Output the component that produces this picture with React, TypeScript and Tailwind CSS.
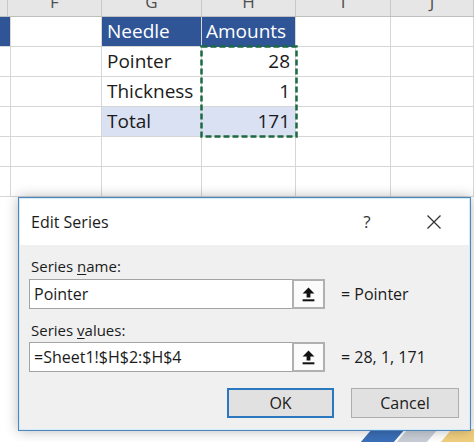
import React from 'react';

const gridCols = 'grid grid-cols-[8px_94px_100px_94px_95px_1fr]';
const cellFont = "font-['Open_Sans','Liberation_Sans',sans-serif]";

type CellProps = {
  children?: React.ReactNode;
  className?: string;
};

function Cell({ children, className = '' }: CellProps) {
  return (
    <div className={`h-[30px] border-r border-b border-[#d6d6d6] flex items-center px-[5px] text-[19px] text-[#1b1b1b] ${className}`}>
      {children}
    </div>
  );
}

function UploadIcon() {
  return (
    <svg width="13" height="15" viewBox="0 0 13 15" fill="#111">
      <path d="M6.5 0.5 L0.6 6.6 L4.6 6.6 L4.6 10.6 L8.4 10.6 L8.4 6.6 L12.4 6.6 Z" />
      <rect x="0.6" y="12.3" width="11.8" height="2" />
    </svg>
  );
}

function RefField({ value }: { value: string }) {
  return (
    <div className="flex h-[30px]">
      <div className="w-[264px] h-full bg-white border border-[#a3a3a3] flex items-center pl-[4px] text-[16px] text-[#1b1b1b]">
        {value}
      </div>
      <button className="-ml-px w-[33px] h-full bg-[#fbfbfb] border-2 border-[#b0b0b0] flex items-center justify-center">
        <UploadIcon />
      </button>
    </div>
  );
}

export default function App() {
  const rows = [
    { name: 'Pointer', amount: '28', total: false },
    { name: 'Thickness', amount: '1', total: false },
    { name: 'Total', amount: '171', total: true },
  ];

  return (
    <div className={`relative w-[474px] h-[442px] overflow-hidden bg-white ${cellFont}`}>
      {/* sheet */}
      <div className="relative">
        <div className={`${gridCols} h-[17px] bg-[#e6e6e6] border-b border-[#bfbfbf] overflow-hidden`}>
          {['', 'F', 'G', 'H', 'I', 'J'].map((c, i) => (
            <div key={i} className="h-[16px] border-r border-[#c8c8c8] flex items-end justify-center">
              <span className="leading-none text-[17px] text-[#505050] mb-[6px]">{c}</span>
            </div>
          ))}
        </div>

        <div className={gridCols}>
          <Cell className="bg-[#2f5597] border-[#2f5597]" />
          <Cell />
          <Cell className="bg-[#2f5597] border-[#2f5597] text-white">Needle</Cell>
          <Cell className="bg-[#2f5597] border-b-[#2f5597] text-white pl-[4px]">Amounts</Cell>
          <Cell />
          <Cell />

          {rows.map((r) => (
            <React.Fragment key={r.name}>
              <Cell />
              <Cell />
              <Cell className={r.total ? 'bg-[#d9e1f2]' : ''}>{r.name}</Cell>
              <Cell className={`justify-end pr-[5px] ${r.total ? 'bg-[#d9e1f2]' : ''}`}>{r.amount}</Cell>
              <Cell />
              <Cell />
            </React.Fragment>
          ))}

          {[0, 1].map((i) => (
            <React.Fragment key={i}>
              <Cell />
              <Cell />
              <Cell />
              <Cell />
              <Cell />
              <Cell />
            </React.Fragment>
          ))}
        </div>

        {/* copy marquee */}
        <svg className="absolute left-[200px] top-[45px]" width="98" height="93" viewBox="0 0 98 93">
          <rect x="1.5" y="1.5" width="95" height="90" fill="none" stroke="#1d6a42" strokeWidth="2.5" strokeDasharray="6 3" />
        </svg>
      </div>

      {/* chart behind dialog */}
      <div className="flex justify-end items-end h-[246px]">
        <svg width="114" height="14" viewBox="360 428 114 14">
          <polygon points="360,442 393,442 405,428 372,428" fill="#3a6fb8" />
          <polygon points="396,442 426,442 438,428 408,428" fill="#c9ced6" />
          <polygon points="440,442 474,442 474,428 452,428" fill="#f1cf7e" />
        </svg>
      </div>

      {/* Edit Series dialog */}
      <div className="absolute left-[18px] top-[197px] w-[453px] h-[234px] border border-[#4f86bd] bg-[#f0f0f0] shadow-[inset_0_0_0_1px_#d3ecf8,0_0_12px_rgba(0,0,0,0.28)] flex flex-col text-[#1b1b1b]">
        <div className="h-[46px] bg-white flex items-center pl-[11px] pr-[27px] mx-px mt-px">
          <span className="text-[16px]">Edit Series</span>
          <span className="ml-auto w-[20px] text-center text-[17px] text-[#333]">?</span>
          <svg className="ml-[49px]" width="16" height="16" viewBox="0 0 16 16" stroke="#333" strokeWidth="1.3">
            <path d="M1.5 1.5 L14.5 14.5 M14.5 1.5 L1.5 14.5" />
          </svg>
        </div>

        <div className="flex flex-col pl-[10px] pt-[11px]">
          <div className="h-[20px] flex items-center pl-[2px] text-[15px]">
            Series&nbsp;<u className="underline-offset-2">n</u>ame:
          </div>
          <div className="mt-[3px] flex items-center">
            <RefField value="Pointer" />
            <span className="ml-[16px] text-[16px]">= Pointer</span>
          </div>

          <div className="mt-[11px] h-[20px] flex items-center pl-[2px] text-[15px]">
            Series&nbsp;<u className="underline-offset-2">v</u>alues:
          </div>
          <div className="mt-[2px] flex items-center">
            <RefField value="=Sheet1!$H$2:$H$4" />
            <span className="ml-[16px] text-[16px]">= 28, 1, 171</span>
          </div>

          <div className="mt-[16px] flex justify-end gap-[17px] pr-[11px]">
            <button className="w-[107px] h-[30px] bg-[#e1e1e1] border-2 border-[#2b77c0] text-[16px]">OK</button>
            <button className="w-[108px] h-[30px] bg-[#e1e1e1] border border-[#adadad] text-[16px]">Cancel</button>
          </div>
        </div>
      </div>
    </div>
  );
}
